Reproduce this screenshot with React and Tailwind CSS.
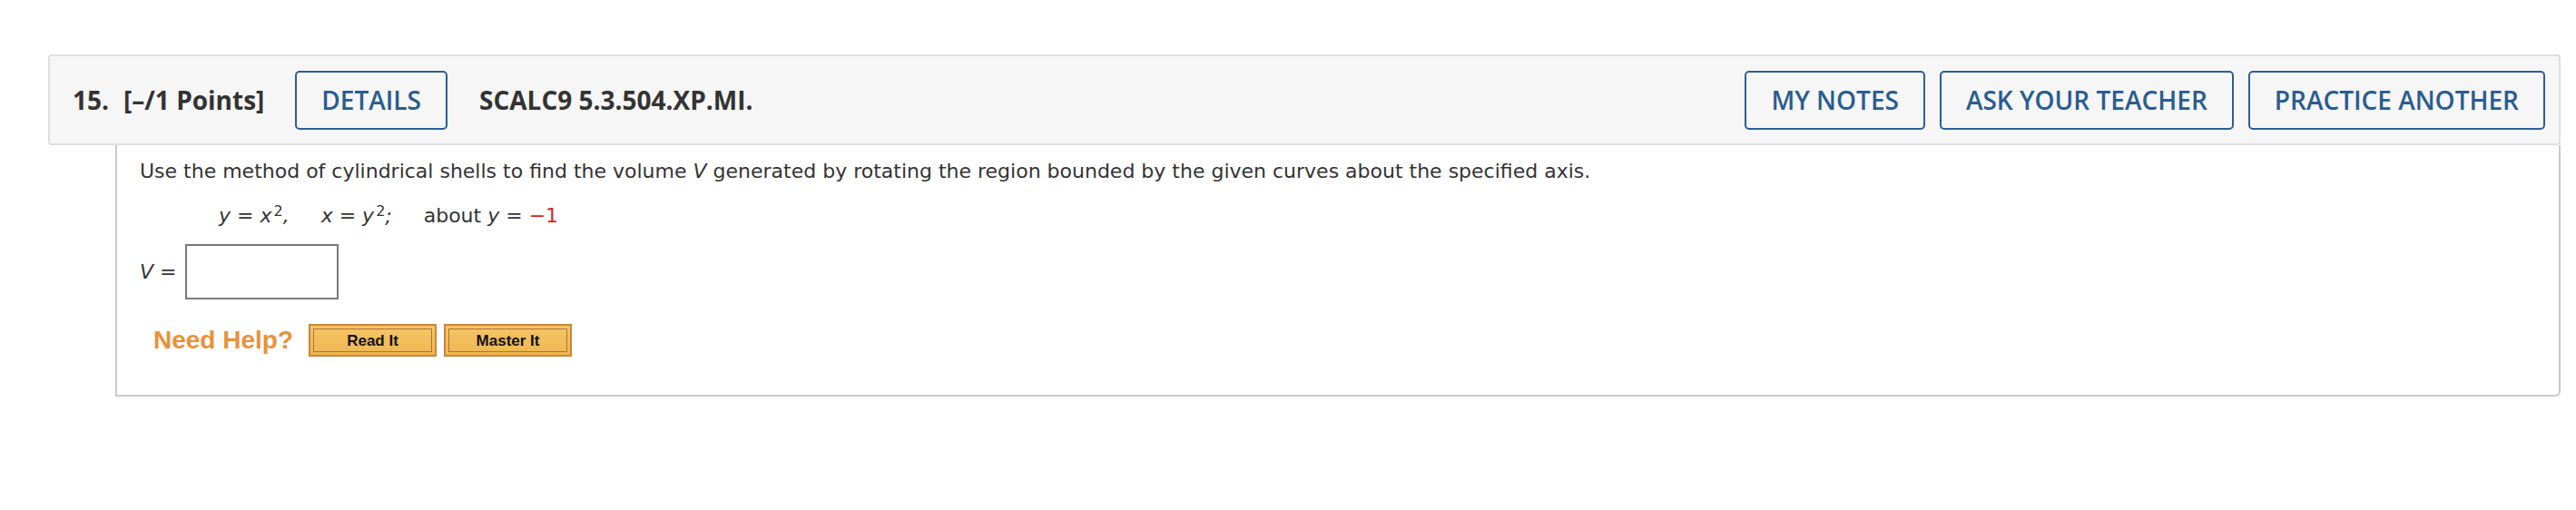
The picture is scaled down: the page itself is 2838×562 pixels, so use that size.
import React from "react";

const headBtn =
    "h-[65px] px-[27px] flex items-center border-2 border-[#2b5f95] rounded-[5px] text-[#2a5c91] text-[28px] font-semibold leading-none";

function HelpButton({ label, width }) {
    return (
        <div
            className="h-[36px] border-2 border-[#c98539] bg-gradient-to-b from-[#f6c565] to-[#eeb650] p-[3px]"
            style={{ width }}
        >
            <div className="h-full border border-[#a8743a] flex items-center justify-center text-[17px] font-bold text-[#111] font-['Liberation_Sans',Arial,sans-serif] leading-none">
                {label}
            </div>
        </div>
    );
}

export default function App() {
    return (
        <div className="w-[2838px] h-[562px] bg-white pt-[60px] pl-[53px] pr-[17px] font-['Open_Sans',sans-serif]">
            {/* question header */}
            <div className="h-[100px] border-2 border-[#dedede] bg-[#f6f6f6] rounded-[4px] flex items-center pl-[25px] pr-[15px]">
                <div className="text-[28px] font-bold text-[#333] leading-none">
                    <span className="mr-[16px]">15.</span>
                    <span>[–/1 Points]</span>
                </div>
                <button type="button" className={headBtn + " ml-[34px]"}>
                    DETAILS
                </button>
                <div className="ml-[35px] text-[28px] font-bold text-[#333] leading-none">
                    SCALC9 5.3.504.XP.MI.
                </div>
                <div className="ml-auto flex gap-[16px]">
                    <button type="button" className={headBtn}>MY NOTES</button>
                    <button type="button" className={headBtn}>ASK YOUR TEACHER</button>
                    <button type="button" className={headBtn}>PRACTICE ANOTHER</button>
                </div>
            </div>

            {/* question body */}
            <div className="ml-[74px] h-[277px] border-2 border-t-0 border-[#cacaca] rounded-br-[6px] pl-[25px] pt-[15px] text-[#333] text-[22px] font-['DejaVu_Sans',Verdana,sans-serif]">
                <p className="leading-[28px]">
                    Use the method of cylindrical shells to find the volume <i>V</i> generated by rotating the region bounded by the given curves about the specified axis.
                </p>
                <p className="leading-[28px] mt-[21px] ml-[87px] whitespace-pre">
                    <i>y</i> = <i>x</i>
                    <sup className="text-[16px] top-[-7px] ml-[2px]">2</sup>
                    <i>,</i>{"     "}
                    <i>x</i> = <i>y</i>
                    <sup className="text-[16px] top-[-7px] ml-[2px]">2</sup>
                    <i>;</i>{"     "}about <i>y</i> = <span className="text-[#d0261d]">−1</span>
                </p>
                <div className="mt-[17px] flex items-center">
                    <span className="whitespace-pre"><i>V</i> =</span>
                    <div className="ml-[9px] w-[169px] h-[61px] border-2 border-[#7a7a7a] bg-white" />
                </div>
                <div className="mt-[27px] ml-[15px] flex items-center">
                    <span className="text-[28px] font-bold text-[#e8913a] font-['Liberation_Sans',Arial,sans-serif] leading-none mr-[17px]">
                        Need Help?
                    </span>
                    <HelpButton label="Read It" width={141} />
                    <div className="w-[8px]" />
                    <HelpButton label="Master It" width={141} />
                </div>
            </div>
        </div>
    );
}
